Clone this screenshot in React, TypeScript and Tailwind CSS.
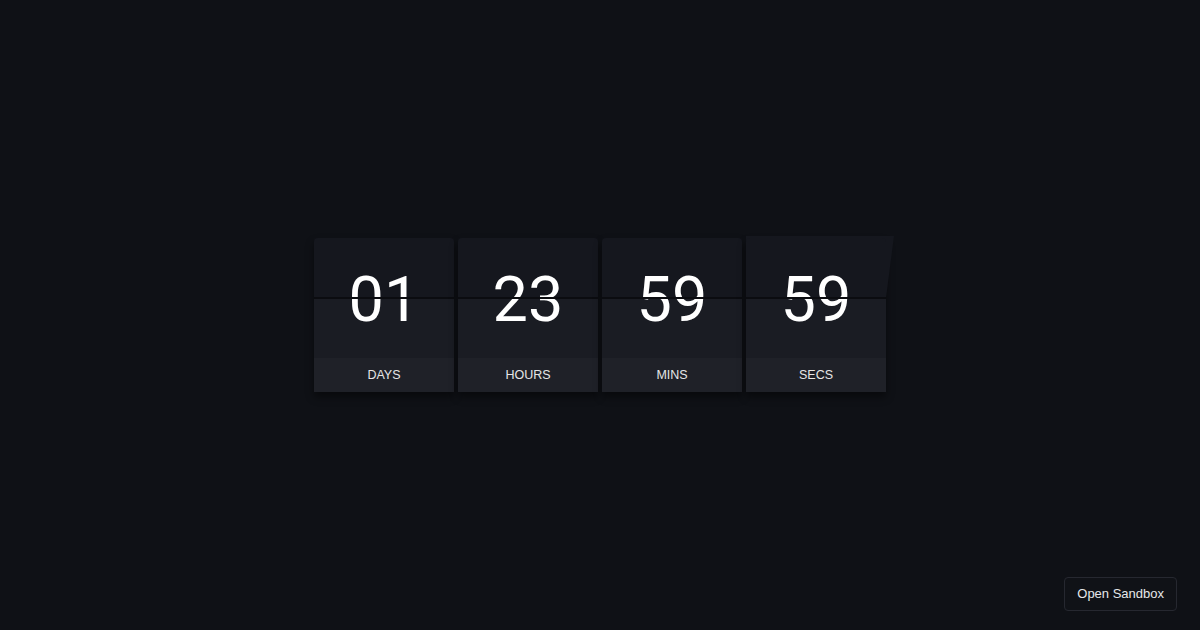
import React from "react"

type Unit = { value: string; label: string; flipping?: boolean }

const units: Unit[] = [
  { value: "01", label: "DAYS" },
  { value: "23", label: "HOURS" },
  { value: "59", label: "MINS" },
  { value: "59", label: "SECS", flipping: true },
]

function FlipCard({ value, label, flipping }: Unit) {
  return (
    <div className="relative w-[140px] shadow-[0_5px_8px_rgba(0,0,0,0.45)]">
      {flipping && (
        // top leaf caught mid-flip, leaning out to the right
        <div
          className="absolute left-0 top-[-2px] h-[62px] w-[148px] bg-[#15171e]"
          style={{ clipPath: "polygon(0 0, 100% 0, 94.6% 100%, 0 100%)" }}
        />
      )}
      <div className="relative grid h-[120px] overflow-hidden rounded-t-[4px]">
        <div className="col-start-1 row-start-1 flex flex-col">
          <div className="h-[60px] bg-[#15171e]" />
          <div className="h-[60px] bg-[#1a1c23]" />
        </div>
        <div className="col-start-1 row-start-1 flex items-center justify-center pt-[3px]">
          <span className="inline-block font-['Roboto',sans-serif] text-[63px] font-normal leading-none text-white">
            {value}
          </span>
        </div>
        {/* hinge line runs across the digits */}
        <div className="col-start-1 row-start-1 flex flex-col pt-[59px]">
          <div className="h-[2px] bg-[#0b0c10]" />
        </div>
      </div>
      <div className="flex h-[34px] items-center justify-center bg-[#1f2128] text-[12.5px] text-[#e6e6e6]">
        {label}
      </div>
    </div>
  )
}

export default function App() {
  return (
    <div
      className="flex h-[630px] w-[1200px] flex-col bg-[#0f1116]"
      style={{ fontFamily: "'Liberation Sans', Arial, sans-serif" }}
    >
      <div className="flex flex-1 items-center justify-center pt-[53px]">
        <div className="flex gap-[4px]">
          {units.map((u) => (
            <FlipCard key={u.label} {...u} />
          ))}
        </div>
      </div>
      <div className="flex justify-end pb-[19px] pr-[23px]">
        <button className="h-[34px] rounded-[4px] border border-[#262830] bg-[#101217] px-[12px] text-[13px] text-[#e6e7ea]">
          Open Sandbox
        </button>
      </div>
    </div>
  )
}
